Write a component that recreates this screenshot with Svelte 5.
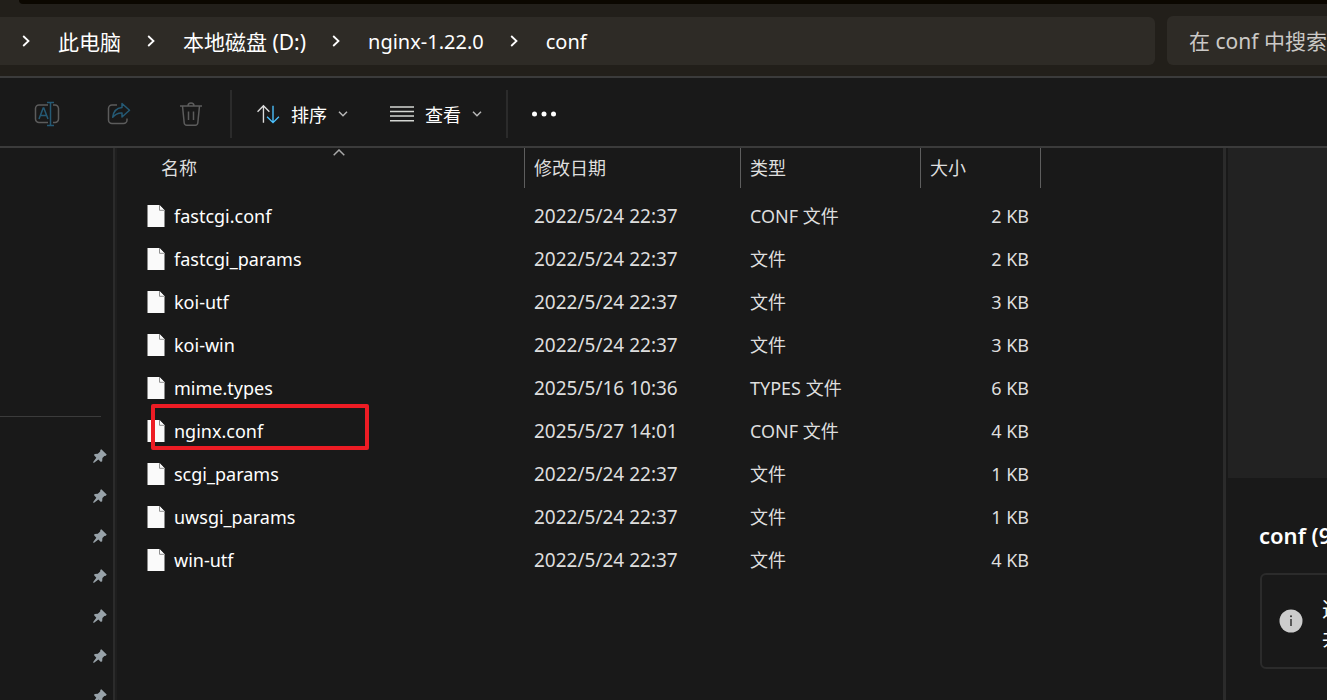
<script>
  const crumbs = ['此电脑', '本地磁盘 (D:)', 'nginx-1.22.0', 'conf'];
  const files = [
    ['fastcgi.conf', '2022/5/24 22:37', 'CONF 文件', '2 KB'],
    ['fastcgi_params', '2022/5/24 22:37', '文件', '2 KB'],
    ['koi-utf', '2022/5/24 22:37', '文件', '3 KB'],
    ['koi-win', '2022/5/24 22:37', '文件', '3 KB'],
    ['mime.types', '2025/5/16 10:36', 'TYPES 文件', '6 KB'],
    ['nginx.conf', '2025/5/27 14:01', 'CONF 文件', '4 KB'],
    ['scgi_params', '2022/5/24 22:37', '文件', '1 KB'],
    ['uwsgi_params', '2022/5/24 22:37', '文件', '1 KB'],
    ['win-utf', '2022/5/24 22:37', '文件', '4 KB']
  ];
  const marked = 'nginx.conf';
  const pins = [1, 2, 3, 4, 5, 6, 7];
  const isLatin = (text) => /^[\w.-]+$/.test(text);
</script>

<div class="window">
  <div class="tabstrip"></div>

  <header class="location">
    <nav class="address" aria-label="地址">
      {#each crumbs as crumb}
        <svg class="sep" viewBox="0 0 8 12" aria-hidden="true"><path d="M1.2 1l5.3 5-5.3 5" /></svg>
        <a class="crumb" class:latin={isLatin(crumb)} href="#{crumb}">{crumb}</a>
      {/each}
    </nav>
    <input class="search" type="text" aria-label="搜索" placeholder="在 conf 中搜索" />
  </header>

  <div class="toolbar" role="toolbar" aria-label="命令">
    <button class="tool" aria-label="重命名" disabled>
      <svg width="26" height="26" viewBox="0 0 26 26">
        <g stroke="#5c5c5c"><path d="M14 4H5a3.500 3.500 0 0 0-3.500 3.500V18A3.500 3.500 0 0 0 5 21.500h9M19 4h2a3.500 3.500 0 0 1 3.500 3.500V18a3.500 3.500 0 0 1-3.500 3.500h-2" /></g>
        <g stroke="#255a75"><path d="M16.500 1.500v23M13 1.500h7M13 24.500h7M5 18l4.200-11h.6L14 18M6.500 14.500h6" /></g>
      </svg>
    </button>
    <button class="tool" aria-label="共享" disabled>
      <svg width="26" height="26" viewBox="0 0 26 26">
        <path stroke="#5c5c5c" d="M11 4H6a3.500 3.500 0 0 0-3.500 3.500V19A3.500 3.500 0 0 0 6 22.500h11.500A3.500 3.500 0 0 0 21 19v-1.500" />
        <path stroke="#255a75" stroke-linejoin="round" d="M16 2.500l7.500 6.700-7.500 6.800v-4c-4-.3-6.500 1-9.300 4.300C7.300 10.500 10.500 7 16 6.500z" />
      </svg>
    </button>
    <button class="tool" aria-label="删除" disabled>
      <svg width="26" height="26" viewBox="0 0 26 26">
        <path stroke="#5c5c5c" d="M2 5h22M10 5a3 3 0 0 1 6 0M4.500 5l1.700 17a2.600 2.600 0 0 0 2.500 2.200h8.600a2.600 2.600 0 0 0 2.500-2.200L21.500 5M10.500 10.500v8.500M15.500 10.500v8.500" />
      </svg>
    </button>
    <span class="rule"></span>
    <button class="menu">
      <svg width="24" height="20" viewBox="0 0 26 22" aria-hidden="true">
        <path stroke="#dcdcdc" d="M8 20.500V2M1.500 8.500L8 2l6.500 6.500" />
        <path stroke="#4cc2ff" d="M18.500 2v18.500M12 14l6.500 6.500L25 14" />
      </svg>
      <span>排序</span>
      <svg width="10" height="6" viewBox="0 0 10 6" aria-hidden="true"><path stroke="#b8b8b8" d="M1 .8l4 4 4-4" /></svg>
    </button>
    <button class="menu">
      <svg width="24" height="18" viewBox="0 0 24 18" aria-hidden="true"><path stroke="#d4d6d2" d="M0 2h24M0 6.500h24M0 11h24M0 15.800h24" /></svg>
      <span>查看</span>
      <svg width="10" height="6" viewBox="0 0 10 6" aria-hidden="true"><path stroke="#b8b8b8" d="M1 .8l4 4 4-4" /></svg>
    </button>
    <span class="rule"></span>
    <button class="more" aria-label="更多">
      <svg width="24" height="6" viewBox="0 0 24 6"><g fill="#fff"><circle cx="2.500" cy="3" r="2.500" /><circle cx="12" cy="3" r="2.500" /><circle cx="21.500" cy="3" r="2.500" /></g></svg>
    </button>
  </div>

  <div class="body">
    <aside class="sidebar">
      <hr />
      <ul>
        {#each pins as pin (pin)}
          <li>
            <svg width="14" height="14" viewBox="0 0 14 14" aria-hidden="true">
              <path fill="#98a2a9" d="M8.300.300l5.400 5.200-.8 1.200-1.500.2-2 2.200-.2 3.200-1.300.8-2.500-2.500L1.100 13.800H.2v-.9L3.300 8.700.9 6.100l.9-1.200 3-.1 2.400-2.300.1-1.400z" />
            </svg>
          </li>
        {/each}
      </ul>
    </aside>

    <main class="files">
      <table>
        <colgroup><col class="c-name" /><col class="c-date" /><col class="c-type" /><col class="c-size" /></colgroup>
        <thead>
          <tr>
            <th scope="col" class="name">
              名称
              <svg class="sorted" width="12" height="7" viewBox="0 0 12 7" aria-hidden="true"><path stroke="#a8a8a8" d="M.7 6.200L6 1l5.300 5.200" /></svg>
            </th>
            <th scope="col">修改日期</th>
            <th scope="col">类型</th>
            <th scope="col">大小</th>
          </tr>
        </thead>
        <tbody>
          {#each files as [name, date, type, size]}
            <tr>
              <td class="name">
                <div class="file">
                  <svg width="18" height="24" viewBox="0 0 18 24" aria-hidden="true">
                    <path fill="#fafafa" d="M.5 1h12l5 5.300V23H.5z" />
                    <path fill="#fafafa" stroke="#8f8f8f" stroke-width="1" d="M12.500 1v5.300h5" />
                  </svg>
                  <span>{name}</span>
                  {#if name === marked}<i class="mark"></i>{/if}
                </div>
              </td>
              <td class="date">{date}</td>
              <td>{type}</td>
              <td class="size">{size}</td>
            </tr>
          {/each}
        </tbody>
      </table>
    </main>

    <aside class="details">
      <div class="preview"></div>
      <h2>conf (9 个项目)</h2>
      <div class="info">
        <svg width="24" height="24" viewBox="0 0 24 24" aria-hidden="true">
          <circle cx="12" cy="12" r="11.500" fill="#cccccc" />
          <path stroke="#333" d="M12 10v7" /><circle cx="12" cy="7.300" r="1" fill="#333" />
        </svg>
        <p>选择单个文件以获取更多信息并<br />共享你的云内容。</p>
      </div>
    </aside>
  </div>
</div>

<style>
  :global(body) { margin: 0; background: #191919; }
  .window {
    display: flex;
    flex-direction: column;
    height: 100vh;
    overflow: hidden;
    background: #191919;
    color: #fff;
    font-family: 'Noto Sans', 'Noto Sans CJK SC', sans-serif;
    font-size: 18px;
  }
  * { box-sizing: border-box; }
  svg { display: block; flex: none; fill: none; stroke-width: 1.5; }
  button { border: 0; padding: 0; background: none; color: inherit; font: inherit; }

  .tabstrip { flex: none; height: 4px; background: #221f1a; }
  .tabstrip::before { content: ''; display: block; height: 4px; margin-left: 19px; border-bottom-left-radius: 4px; background: #0b0700; }
  .location {
    flex: none;
    display: flex;
    gap: 12px;
    height: 74px;
    padding: 12px 0 11px;
    border-bottom: 2px solid #3b3b3b;
    background: #221f1a;
    font-size: 21px;
  }
  .address {
    flex: 1;
    display: flex;
    align-items: center;
    margin-top: 1px;
    padding-left: 22px;
    border-radius: 0 6px 6px 0;
    background: #2e2b26;
  }
  .sep { width: 8px; height: 12px; margin-right: 28px; stroke: #fff; stroke-width: 1.8; }
  .crumb { margin-right: 26px; color: #fff; text-decoration: none; white-space: nowrap; }
  .crumb.latin { font-size: 20px; }
  .search {
    flex: none;
    width: 160px;
    padding: 0 0 0 22px;
    border: 0;
    border-radius: 6px 0 0 6px;
    background: #2e2b26;
    color: #fff;
    font: inherit;
  }
  .search::placeholder { color: #cbc9c6; opacity: 1; }

  .toolbar {
    flex: none;
    display: flex;
    align-items: center;
    height: 70px;
    padding: 4px 0 0 34px;
    border-bottom: 2px solid #3b3b3b;
  }
  .tool { margin-right: 46px; }
  .toolbar .tool:nth-child(3) { margin-right: 26px; }
  .rule { width: 2px; height: 48px; background: #2b2b2b; }
  .menu { display: flex; align-items: center; gap: 11px; margin-left: 24px; }
  .menu + .menu { margin-left: 42px; }
  .menu + .rule { margin-left: 24px; }
  .more { margin-left: 24px; }

  .body { flex: 1; display: flex; min-height: 0; }
  .sidebar { flex: none; width: 117px; border-right: 2px solid #1e1e1e; overflow: hidden; box-shadow: inset -2px 0 #2b2b2b; }
  .sidebar hr { height: 1px; margin: 268px 14px 0 0; border: 0; background: #3b3b3b; }
  .sidebar ul { margin: 19px 0 0; padding: 0 8px 0 0; list-style: none; }
  .sidebar li { display: flex; align-items: center; justify-content: flex-end; height: 40px; }

  .files { flex: 1; min-width: 0; }
  table { width: 924px; border-collapse: separate; border-spacing: 0; table-layout: fixed; }
  .c-name { width: 408px; }
  .c-date { width: 216px; }
  .c-type { width: 180px; }
  .c-size { width: 120px; }
  th, td { padding: 0 0 0 9px; text-align: left; font-weight: 400; line-height: 26px; white-space: nowrap; }
  th { position: relative; height: 40px; border-right: 1px solid #5e5e5e; color: #dedede; }
  th.name { padding-left: 44px; }
  .sorted { position: absolute; top: 1px; right: 179px; }
  tbody::before { content: ''; display: block; height: 6px; }
  td { height: 43px; color: #dedede; }
  td.name { padding-left: 30px; color: #fff; }
  td.date { font-size: 19px; }
  td.size { padding: 0 12px 0 0; text-align: right; }
  .file { position: relative; display: flex; align-items: center; gap: 9px; }
  .mark { position: absolute; top: -14px; left: 4px; width: 218px; height: 46px; border: 4px solid #ed1c24; border-radius: 2px; }

  .details { flex: none; width: 104px; border-left: 3px solid #2b2b2b; overflow: hidden; }
  .preview { height: 330px; margin-left: 2px; background: #222; }
  h2 { margin: 42px 0 0 33px; font-size: 22px; line-height: 30px; font-weight: 600; white-space: nowrap; }
  .info {
    display: flex;
    align-items: center;
    gap: 19px;
    width: 380px;
    height: 96px;
    margin: 23px 0 0 34px;
    padding-left: 17px;
    border: 2px solid #2b2b2b;
    border-radius: 6px;
  }
  .info p { margin: 0; padding-top: 6px; font-size: 20px; line-height: 29px; white-space: nowrap; }
</style>
